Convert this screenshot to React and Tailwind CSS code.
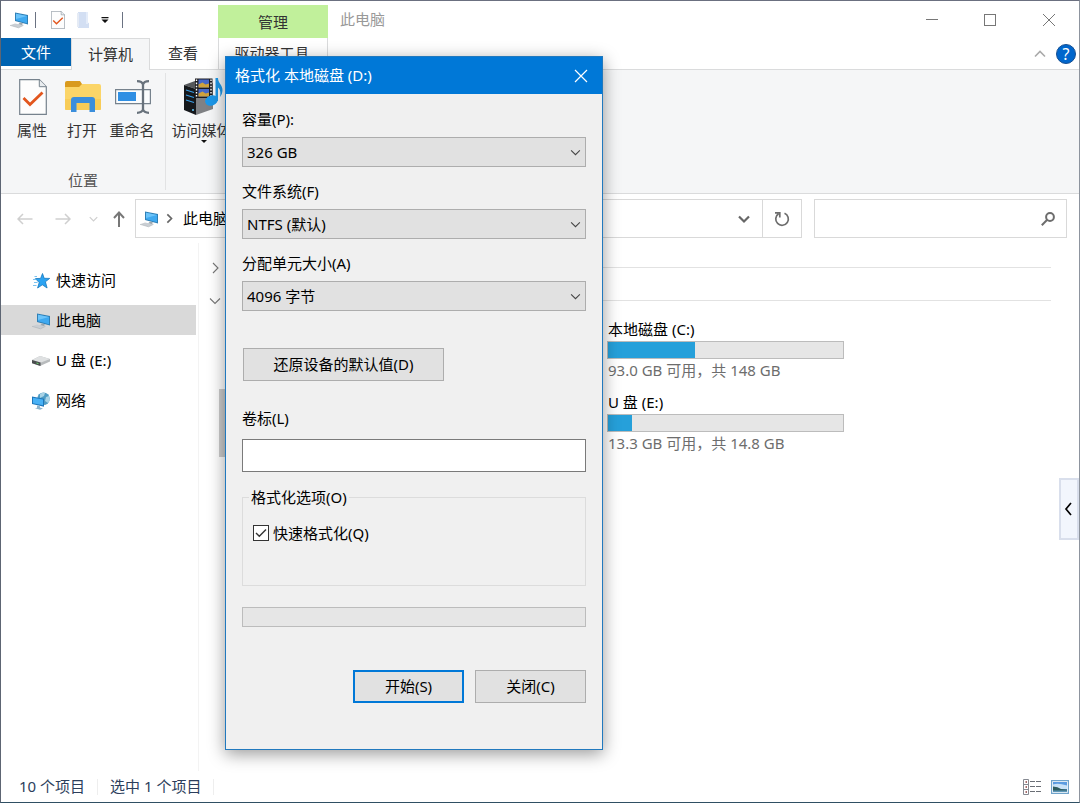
import React from 'react';

const PcIcon = ({ className }) => (
  <svg viewBox="0 0 20 18" className={className} aria-hidden="true">
    <path d="M6 1.5 19 4v9.5L6 10z" fill="#2f7fb5" />
    <path d="M7 2.7 18 4.9v7.3L7 9.2z" fill="#3fa9f0" />
    <path d="M7 2.7 18 4.9 7 8z" fill="#6cc4fa" />
    <path d="m11 11.6 3 .8-1 1.8-4-.8z" fill="#9aa5ad" />
    <path d="m1 14.3 5-1.8 8.5 1.8-5 2.5z" fill="#c9ced3" />
    <path d="m1 14.3 8.5 2.5 5-2.5" fill="none" stroke="#a9b0b6" strokeWidth=".6" />
  </svg>
);

const DocCheckIcon = ({ className }) => (
  <svg viewBox="0 0 28 36" className={className} aria-hidden="true">
    <path d="M.7.7h19.6l7 7v27.6H.7z" fill="#fdfdfd" stroke="#76828d" strokeWidth="1.2" />
    <path d="M20.3.7v7h7" fill="#e9edf0" stroke="#76828d" strokeWidth="1" />
    <path d="m4.500 19 6.500 6.500L23.500 13.500" fill="none" stroke="#e2561e" strokeWidth="2.800" />
  </svg>
);

const FolderIcon = () => (
  <svg viewBox="0 0 36 32" className="h-8 w-9" aria-hidden="true">
    <path d="M0 2q0-2 2-2h13l2 3v5H0z" fill="#d99a1e" />
    <path d="M0 6h14l3-3h17q2 0 2 2v23q0 1-1 1H1q-1 0-1-1z" fill="#fbd568" />
    <path d="M0 18h36v10q0 1-1 1H1q-1 0-1-1z" fill="#f6c64d" opacity=".6" />
    <path d="M6 31V19q0-3 3-3h18q3 0 3 3v12h-5.500v-9h-13v9z" fill="#3a8edc" />
  </svg>
);

const RenameIcon = () => (
  <svg viewBox="0 0 36 34" className="h-[34px] w-9" fill="none" aria-hidden="true">
    <path d="M.6 9.6h34.800v14H.6z" fill="#fafcfd" stroke="#76828d" strokeWidth="1.200" />
    <path d="M3 12h18v9H3z" fill="#2f8fe3" />
    <path d="M22 1.200q5 0 6 3.300 1-3.300 6-3.300M22 32.800q5 0 6-3.300 1 3.300 6 3.300M28 4v26" stroke="#68727c" strokeWidth="2.300" />
  </svg>
);

const MediaIcon = () => (
  <svg viewBox="0 0 40 38" className="h-[38px] w-10" aria-hidden="true">
    <path d="m1 7 11-4 18 2-17 6z" fill="#55585c" />
    <path d="m1 7 12 4v26L1 32z" fill="#15181c" />
    <path d="m13 11 17-6v26l-17 6z" fill="#7f8184" />
    <path d="m3 12 8 2.500M3 17l8 2.500M3 22l8 2.500" stroke="#3b9fe8" strokeWidth="1.200" />
    <circle cx="10" cy="32" r="1" fill="#6cf" />
    <path d="M12 .5h17.500V20H12z" fill="#1c1c20" />
    <path d="M13.500 1.500V20M28 1.500V20" stroke="#fff" strokeWidth="1.400" strokeDasharray="1.600 1.500" />
    <path d="M15.500 1.500h10.500v8H15.500zM15.500 11h10.500v7.500H15.500z" fill="#4668c8" />
    <path d="m15.500 6.500 4-2 3 2 3.500-1v4H15.500zM15.500 15.500l4-2 3 2 3.500-1v4H15.500z" fill="#cfa23c" />
    <ellipse cx="28.500" cy="22.500" rx="6.500" ry="5" fill="#1c97e8" transform="rotate(-20 28.500 22.500)" />
    <path d="M32.500 0H35c0 5 4.500 7 4.500 12 0 3-1 5-2.500 7 1-5 0-8-2-9.500V23h-2.500z" fill="#1c97e8" />
  </svg>
);

const StarIcon = () => (
  <svg viewBox="0 0 18 16" className="h-4 w-[18px]" aria-hidden="true">
    <path d="m10.500.5 1.700 4.800 5.500.1-4.300 3.400 1.700 6.200-4.800-3.200L5.600 15l1.600-5.400-3.800-4 5.200-.2z" fill="#2ba3f2" stroke="#1777bd" strokeWidth=".8" />
    <path d="M2.500 3.500H5M1 6.500h3.500M2 9.500h3.500M1 12.500h3.500" stroke="#58b4ee" strokeWidth=".8" />
  </svg>
);

const UsbIcon = () => (
  <svg viewBox="0 0 18 10" className="h-[10px] w-[18px]" aria-hidden="true">
    <path d="M0 4 8 0l10 3v2.500L8 10 0 7z" fill="#b8bbbd" />
    <path d="m0 4 8-4 10 3-9 3.600z" fill="#dfe1e2" />
    <path d="m0 4 8.500 2.600V10L0 7.200z" fill="#4a4c4e" />
    <path d="m4.500 7 2 .6" stroke="#6ee06e" />
  </svg>
);

const NetworkIcon = () => (
  <svg viewBox="0 0 18 18" className="h-[18px] w-[18px]" aria-hidden="true">
    <circle cx="11.500" cy="6.800" r="6.300" fill="#4f9cc4" />
    <path d="M8 2q3-2 5-1l-1 3-4 2zM14 5l3-1 1 4-2 3-3-2z" fill="#a9d3e6" />
    <path d="m0 4.500 12 2.200v8L0 12z" fill="#1d76ba" />
    <path d="m1 5.700 10 1.900v5.700L1 11.200z" fill="#48b1f5" />
    <path d="m5 13.500 3 .7v1.300l3 1-3 1.300-5-1.500 2-.5z" fill="#8db4cc" />
  </svg>
);

const chevronPaths = {
  down: 'm1 1.500 5 5 5-5',
  up: 'm1 6.500 5-5 5 5',
  left: 'M8 -2 3 4l5 6',
  right: 'M4 -1 9 4 4 9',
};

const Chevron = ({ dir = 'down', className = 'h-2 w-3', width = 1.3 }) => (
  <svg viewBox="0 0 12 8" className={`overflow-visible ${className}`} fill="none" stroke="currentColor" strokeWidth={width} aria-hidden="true">
    <path d={chevronPaths[dir]} />
  </svg>
);

const Arrow = ({ className }) => (
  <svg viewBox="0 0 16 12" className={className} fill="none" stroke="currentColor" strokeWidth="1.500" aria-hidden="true">
    <path d="M15.500 6H1M6 1 1 6l5 5" />
  </svg>
);

const Caret = () => (
  <svg viewBox="0 0 6 3" className="ml-1 h-[3px] w-[6px]" aria-hidden="true">
    <path d="M0 0h6L3 3z" fill="#111" />
  </svg>
);

const TitleBar = () => (
  <header className="flex h-[37px] items-start">
    <div className="flex h-[37px] w-[217px] shrink-0 items-center pl-2">
      <PcIcon className="h-[18px] w-5" />
      <span className="ml-1.5 h-4 w-px bg-gray-500" />
      <button aria-label="属性" className="ml-[15px]">
        <DocCheckIcon className="h-[18px] w-[14px]" />
      </button>
      <button aria-label="新建文件夹" className="ml-3">
        <svg viewBox="0 0 13 16" className="h-4 w-[13px]" aria-hidden="true">
          <path d="M1 0h8v10l3 1v5H1z" fill="#d3dff3" />
          <path d="M0 1h2v14H0z" fill="#e5ebf5" />
          <path d="M9 0h2v12H9z" fill="#e4ecf9" />
        </svg>
      </button>
      <button aria-label="自定义快速访问工具栏" className="ml-[11px]">
        <svg viewBox="0 0 8 6" className="h-[6px] w-2" aria-hidden="true">
          <path d="M.5 0h7v1.200h-7zM.5 2.500h7L4 6z" fill="#111" />
        </svg>
      </button>
      <span className="ml-[13px] h-4 w-px bg-gray-500" />
    </div>
    <div className="mt-1 flex h-[33px] w-[110px] shrink-0 items-center justify-center bg-[#c1f09b] pt-px text-[#333]">管理</div>
    <h1 className="ml-3 flex-1 leading-[37px] text-[#999]">此电脑</h1>
    <div className="flex h-[37px] items-center text-[#777]">
      <button aria-label="最小化" className="flex h-full w-[58px] items-center justify-center">
        <span className="h-px w-3 bg-[#777]" />
      </button>
      <button aria-label="最大化" className="flex h-full w-[58px] items-center justify-center">
        <span className="size-3 border border-[#777]" />
      </button>
      <button aria-label="关闭" className="flex h-full w-[60px] items-center justify-center">
        <svg viewBox="0 0 12 12" className="size-3" stroke="currentColor" aria-hidden="true">
          <path d="m0 0 12 12M12 0 0 12" />
        </svg>
      </button>
    </div>
  </header>
);

const RibbonTabs = () => (
  <nav className="flex h-8 items-start border-b border-[#dadbdc] text-[#333]">
    <button className="h-7 w-[70px] bg-[#0063b1] text-white">文件</button>
    <button className="h-8 w-[79px] border border-b-0 border-[#dadbdc] bg-[#f5f6f7]">计算机</button>
    <button className="h-[31px] w-[68px] pr-0.5">查看</button>
    <button className="h-[31px] w-[110px] border-x border-[#dadbdc] pr-0.5">驱动器工具</button>
    <div className="ml-auto flex h-[31px] items-center gap-2.5 pr-[3px]">
      <button aria-label="折叠功能区" className="text-[#aaa]">
        <Chevron dir="up" className="h-2 w-3" width={1.6} />
      </button>
      <button aria-label="帮助" className="size-5 rounded-full border border-[#164f92] bg-[#0066cc] text-base leading-[18px] text-white">
        ?
      </button>
    </div>
  </nav>
);

const RibbonButton = ({ icon, label, className, children }) => (
  <button className={`flex shrink-0 flex-col items-center whitespace-nowrap ${className}`}>
    <span className="flex h-10 items-center pl-0.5">{icon}</span>
    <span className="mt-[3px] leading-5">{label}</span>
    {children}
  </button>
);

const Ribbon = () => (
  <section className="flex h-[124px] border-b border-[#dadbdc] bg-[#f5f6f7] text-[#333]">
    <div className="my-[3px] flex w-[165px] flex-col border-r border-[#e2e3e4] pt-1 pl-1.5">
      <div className="flex">
        <RibbonButton className="w-[50px]" icon={<DocCheckIcon className="h-9 w-7" />} label="属性" />
        <RibbonButton className="w-[50px]" icon={<FolderIcon />} label="打开" />
        <RibbonButton className="w-[50px]" icon={<RenameIcon />} label="重命名" />
      </div>
      <div className="mt-auto pr-1.5 text-center leading-5 text-[#555]">位置</div>
    </div>
    <RibbonButton className="w-[71px] pt-[7px]" icon={<MediaIcon />} label="访问媒体">
      <Caret />
    </RibbonButton>
  </section>
);

const AddressBar = () => (
  <section className="flex h-[49px] items-center pr-3">
    <div className="flex w-[134px] shrink-0 items-center pl-4 text-[#cfcfcf]">
      <button aria-label="后退">
        <Arrow className="h-3 w-4" />
      </button>
      <button aria-label="前进" className="ml-[22px]">
        <Arrow className="h-3 w-4 rotate-180" />
      </button>
      <button aria-label="最近浏览的位置" className="ml-[18px]">
        <Chevron className="h-[6px] w-[9px]" width={1.6} />
      </button>
      <button aria-label="上移" className="ml-[15px] text-[#777]">
        <svg viewBox="0 0 12 16" className="h-4 w-3" fill="none" stroke="currentColor" strokeWidth="2" aria-hidden="true">
          <path d="M6 16V1.500M1 7l5-5.500L11 7" />
        </svg>
      </button>
    </div>
    <div className="flex h-[39px] min-w-0 flex-1 items-center border border-[#d9d9d9] pl-[3px]">
      <PcIcon className="h-[18px] w-5 shrink-0" />
      <span className="ml-[5px] text-[#666]">
        <Chevron dir="right" className="h-[7px] w-2.5" width={2} />
      </span>
      <span className="ml-[9px] whitespace-nowrap">此电脑</span>
      <button aria-label="上一个位置" className="ml-auto mr-3 text-[#666]">
        <Chevron className="h-2 w-3" width={2.2} />
      </button>
      <button aria-label="刷新" className="flex h-full w-[39px] items-center justify-center border-l border-[#d9d9d9] text-[#6d6d6d]">
        <svg viewBox="0 0 16 16" className="size-4" fill="none" stroke="currentColor" strokeWidth="1.700" aria-hidden="true">
          <path d="M10.500 2.200a6.300 6.300 0 1 1-6 .6M1 1.800h4.800V6.500" />
        </svg>
      </button>
    </div>
    <div className="ml-3 flex h-[39px] w-[253px] items-center border border-[#d9d9d9] pr-[11px]">
      <input type="search" aria-label="搜索" className="h-full min-w-0 flex-1 pl-2 outline-none" />
      <svg viewBox="0 0 14 14" className="size-[14px] text-[#6d6d6d]" fill="none" stroke="currentColor" strokeWidth="2" aria-hidden="true">
        <circle cx="9" cy="5" r="3.900" />
        <path d="M6.200 7.800.8 13.200" />
      </svg>
    </div>
  </section>
);

const places = [
  { label: '快速访问', icon: <StarIcon /> },
  { label: '此电脑', icon: <PcIcon className="h-[18px] w-5" />, active: true },
  { label: 'U 盘 (E:)', icon: <UsbIcon /> },
  { label: '网络', icon: <NetworkIcon /> },
];

const Sidebar = () => (
  <aside className="w-[198px] shrink-0 border-r border-[#f3f3f3] pt-[22px] pr-0.5">
    <ul className="flex flex-col gap-2.5">
      {places.map((place) => (
        <li key={place.label}>
          <a href="#" className={`flex h-[30px] items-center pl-[30px] ${place.active ? 'bg-[#d9d9d9]' : ''}`}>
            <span className="flex w-5 justify-center pt-0.5">{place.icon}</span>
            <span className="ml-[5px]">{place.label}</span>
          </a>
        </li>
      ))}
    </ul>
  </aside>
);

const GroupHeader = ({ dir, label }) => (
  <div className="flex h-[33px] items-center gap-2 text-[#777]">
    <button aria-label={label}>
      <Chevron dir={dir} className="h-2 w-3" width={1.1} />
    </button>
    <span className="h-px flex-1 bg-[#e2e2e2]" />
  </div>
);

const Drive = ({ name, used, caption }) => (
  <div className="h-[73px] pt-0.5 whitespace-nowrap">
    <div className="pl-px leading-5">{name}</div>
    <div
      role="meter"
      aria-label={name}
      aria-valuenow={used}
      aria-valuemin={0}
      aria-valuemax={100}
      className="mt-0.5 h-[18px] border border-[#bcbcbc] bg-[#e6e6e6]"
    >
      <div className="h-full bg-[#26a0da]" style={{ width: `${used}%` }} />
    </div>
    <div className="mt-px pl-px leading-5 text-[#6d6d6d]">{caption}</div>
  </div>
);

const Content = () => (
  <main className="min-w-0 flex-1 pt-2 pl-[10px]">
    <div className="pr-2">
      <GroupHeader dir="right" label="文件夹" />
      <GroupHeader dir="down" label="设备和驱动器" />
    </div>
    <div className="flex pl-[10px]">
      <div className="w-[388px] shrink-0 pt-[72px]">
        <div className="h-[68px] w-[340px] bg-[#cccccc]" />
      </div>
      <div className="w-[237px]">
        <Drive name="本地磁盘 (C:)" used={37} caption="93.0 GB 可用，共 148 GB" />
        <Drive name="U 盘 (E:)" used={10} caption="13.3 GB 可用，共 14.8 GB" />
      </div>
    </div>
  </main>
);

const StatusBar = () => (
  <footer className="flex h-[31px] items-center pr-2.5 pl-[18px] text-[#2c3e5c]">
    <span>10 个项目</span>
    <span className="ml-3 h-4 w-px bg-[#eee]" />
    <span className="ml-3">选中 1 个项目</span>
    <span className="ml-3 h-4 w-px bg-[#eee]" />
    <div className="ml-auto flex items-center gap-[10px]">
      <button aria-label="详细信息">
        <svg viewBox="0 0 18 16" className="h-4 w-[18px]" fill="none" aria-hidden="true">
          <path d="M.5.5h5v15h-5zM.5 5.500h5M.5 10.500h5" stroke="#858991" />
          <path d="M2.500 3h1.500M2.500 8h1.500M2.500 13h1.500" stroke="#8a3b3b" strokeWidth="1.500" />
          <path d="M7 2.500h5M13 2.500h5M7 7.500h5M13 7.500h5M7 12.500h5M13 12.500h5" stroke="#6a6e75" />
        </svg>
      </button>
      <button aria-label="大图标">
        <svg viewBox="0 0 18 14" className="h-[14px] w-[18px]" aria-hidden="true">
          <path d="M.6.6h16.800v12.800H.6z" fill="#fff" stroke="#6fa3cb" strokeWidth="1.200" />
          <path d="M2 2h14v10H2z" fill="#5b9be0" />
          <path d="M2 4.500q5-2 14 1V9H2z" fill="#c8e2f8" />
          <path d="M2 6.500q5 0 8 2.500l6 .5V12H2z" fill="#2f5d60" />
          <path d="M2 10.500h14V12H2z" fill="#5f98b8" />
        </svg>
      </button>
    </div>
  </footer>
);

const SelectField = ({ id, label, value }) => (
  <div className="flex flex-col gap-2">
    <label htmlFor={id} className="leading-5">
      {label}
    </label>
    <div className="relative text-[#444]">
      <select id={id} defaultValue={value} className="block h-[30px] w-full appearance-none border border-[#adadad] bg-[#e1e1e1] pl-1 text-black">
        <option>{value}</option>
      </select>
      <Chevron className="pointer-events-none absolute top-3 right-[5px] h-[7px] w-[11px]" width={1.2} />
    </div>
  </div>
);

const FormatDialog = () => (
  <section
    role="dialog"
    aria-labelledby="dialog-title"
    className="absolute top-[55px] left-56 w-[378px] border border-[#2179be] bg-[#f0f0f0] text-black shadow-[0_4px_16px_rgba(0,0,0,0.4)]"
  >
    <header className="flex h-[37px] items-center justify-between bg-[#0078d7] pr-[15px] pl-[9px] text-white">
      <h2 id="dialog-title">格式化 本地磁盘 (D:)</h2>
      <button aria-label="关闭">
        <svg viewBox="0 0 12 12" className="size-3 overflow-visible" stroke="currentColor" strokeWidth="1.200" aria-hidden="true">
          <path d="m0 0 12 12M12 0 0 12" />
        </svg>
      </button>
    </header>
    <form className="px-4 pt-[15px] pb-[46px]" onSubmit={(e) => e.preventDefault()}>
      <div className="flex flex-col gap-[14px]">
        <SelectField id="capacity" label="容量(P):" value="326 GB" />
        <SelectField id="filesystem" label="文件系统(F)" value="NTFS (默认)" />
        <SelectField id="unit-size" label="分配单元大小(A)" value="4096 字节" />
      </div>

      <button type="button" className="mt-[37px] ml-px block h-[33px] w-[201px] border border-[#adadad] bg-[#e1e1e1]">
        还原设备的默认值(D)
      </button>

      <label htmlFor="volume" className="mt-[27px] block leading-5">
        卷标(L)
      </label>
      <input id="volume" type="text" className="mt-[11px] block h-[33px] w-full border border-[#7a7a7a] bg-white px-1 outline-none" />

      <fieldset className="mt-[15px] h-[99px] border border-[#dcdcdc] pl-[10px]">
        <legend className="-ml-1 px-0.5 leading-5">格式化选项(O)</legend>
        <label className="mt-4 flex items-center gap-1 leading-5">
          <span className="grid size-4 place-items-center">
            <input type="checkbox" defaultChecked className="peer col-start-1 row-start-1 size-4 appearance-none border border-[#333] bg-white" />
            <svg viewBox="0 0 12 10" className="pointer-events-none col-start-1 row-start-1 h-[10px] w-3 opacity-0 peer-checked:opacity-100" fill="none" stroke="#333" strokeWidth="1.400" aria-hidden="true">
              <path d="m1 5 3.300 3.300L11 1.500" />
            </svg>
          </span>
          快速格式化(Q)
        </label>
      </fieldset>

      <div role="progressbar" aria-label="进度" aria-valuenow={0} className="mt-[21px] h-5 border border-[#bcbcbc] bg-[#e6e6e6]" />

      <div className="mt-[43px] flex justify-end gap-[11px]">
        <button type="submit" className="h-[33px] w-[111px] border-2 border-[#0078d7] bg-[#e1e1e1]">
          开始(S)
        </button>
        <button type="button" className="h-[33px] w-[111px] border border-[#adadad] bg-[#e1e1e1]">
          关闭(C)
        </button>
      </div>
    </form>
  </section>
);

const App = () => (
  <div className="relative flex min-h-screen flex-col border border-t-[#6b7080] border-r-[#8d949e] border-b-[#2f4f63] border-l-[#5d6573] bg-white font-['Noto_Sans','Noto_Sans_CJK_SC',sans-serif] text-[15px] text-black">
    <TitleBar />
    <RibbonTabs />
    <Ribbon />
    <AddressBar />
    <div className="flex flex-1">
      <Sidebar />
      <Content />
      <button aria-label="展开窗格" className="mt-1 flex h-[62px] w-5 items-center justify-center self-center border-2 border-[#d9dfec] bg-[#f2f6fd]">
        <Chevron dir="left" className="h-2 w-3" width={1.7} />
      </button>
    </div>
    <StatusBar />
    <FormatDialog />
  </div>
);

export default App;
